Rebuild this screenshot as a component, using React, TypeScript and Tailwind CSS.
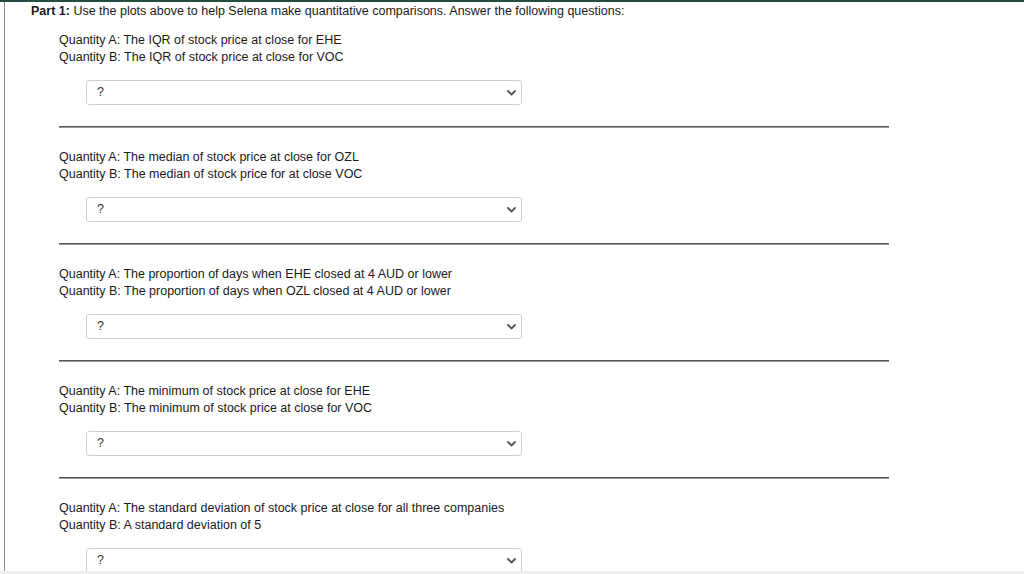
import React from "react";

const blocks: [string, string][] = [
  ["Quantity A: The IQR of stock price at close for EHE", "Quantity B: The IQR of stock price at close for VOC"],
  ["Quantity A: The median of stock price at close for OZL", "Quantity B: The median of stock price for at close VOC"],
  ["Quantity A: The proportion of days when EHE closed at 4 AUD or lower", "Quantity B: The proportion of days when OZL closed at 4 AUD or lower"],
  ["Quantity A: The minimum of stock price at close for EHE", "Quantity B: The minimum of stock price at close for VOC"],
  ["Quantity A: The standard deviation of stock price at close for all three companies", "Quantity B: A standard deviation of 5"],
];

function Chevron() {
  return (
    <svg width="9" height="6" viewBox="0 0 9 6" className="block">
      <path d="M1 1 L4.5 4.5 L8 1" fill="none" stroke="#555" strokeWidth="1.8" strokeLinecap="round" strokeLinejoin="round" />
    </svg>
  );
}

export default function App() {
  return (
    <div
      className="relative w-[1024px] h-[574px] overflow-hidden bg-white text-[12.5px] leading-[17px] text-[#1a1a1a]"
      style={{ fontFamily: '"Liberation Sans", Arial, Helvetica, sans-serif' }}
    >
      <div className="h-[2px] bg-[#234d3c]" />
      <div className="ml-[4px] border-l border-[#8a8a8a] h-[572px]">
        <div className="pl-[26px] pt-[1px]">
          <span className="font-bold">Part 1:</span> Use the plots above to help Selena make quantitative comparisons. Answer the following questions:
        </div>
        <div className="pl-[54px] pt-[12px] w-[884px]">
          {blocks.map((b, i) => (
            <div key={i}>
              <div>{b[0]}</div>
              <div>{b[1]}</div>
              <div className="mt-[14px] ml-[27px] w-[436px] h-[25px] border border-[#cfcfcf] rounded-[3px] flex items-center justify-between pl-[10px] pr-[5px] text-[#333]">
                <span>?</span>
                <Chevron />
              </div>
              {i < blocks.length - 1 && (
                <div className="mt-[21px] mb-[21px] border-t border-[#555] border-b border-b-[#9a9a9a]" />
              )}
            </div>
          ))}
        </div>
      </div>
      <div className="absolute left-0 right-0 bottom-0 h-[3px] bg-[#eeeeee]" />
    </div>
  );
}
